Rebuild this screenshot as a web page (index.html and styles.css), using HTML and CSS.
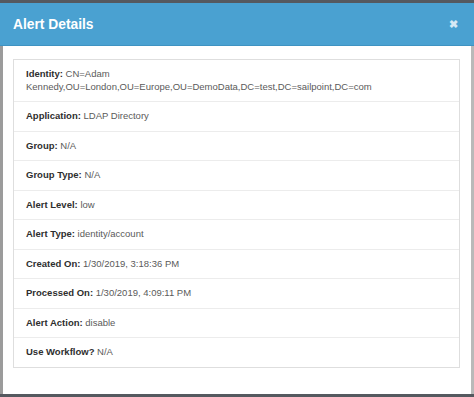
FILE: index.html
```html
<!DOCTYPE html>
<html>
<head>
<meta charset="utf-8">
<link rel="stylesheet" href="styles.css">
</head>
<body>
<div class="modal">
  <div class="modal-header">
    <h1 class="modal-title">Alert Details</h1>
    <span class="close">&#x2716;</span>
  </div>
  <div class="modal-body">
    <ul class="details">
      <li class="row"><b>Identity:</b> CN=Adam Kennedy,OU=London,OU=Europe,OU=DemoData,DC=test,DC=sailpoint,DC=com</li>
      <li class="row"><b>Application:</b> LDAP Directory</li>
      <li class="row"><b>Group:</b> N/A</li>
      <li class="row"><b>Group Type:</b> N/A</li>
      <li class="row"><b>Alert Level:</b> low</li>
      <li class="row"><b>Alert Type:</b> identity/account</li>
      <li class="row"><b>Created On:</b> 1/30/2019, 3:18:36 PM</li>
      <li class="row"><b>Processed On:</b> 1/30/2019, 4:09:11 PM</li>
      <li class="row"><b>Alert Action:</b> disable</li>
      <li class="row"><b>Use Workflow?</b> N/A</li>
    </ul>
  </div>
</div>
</body>
</html>
```

FILE: styles.css
```css
html, body {
  margin: 0;
  padding: 0;
  background: #55595f;
}
body {
  width: 474px;
  height: 397px;
  overflow: hidden;
  font-family: "Liberation Sans", Arial, sans-serif;
}
.modal {
  margin-top: 3px;
  display: flex;
  flex-direction: column;
  height: 391px;
}
.modal-header {
  height: 43px;
  background: #4aa1d1;
  display: flex;
  align-items: center;
  justify-content: space-between;
  padding: 0 16px 0 13px;
  box-sizing: border-box;
  border-bottom: 1px solid #3f93c2;
}
.modal-title {
  margin: 0;
  font-size: 13.8px;
  font-weight: bold;
  color: #ffffff;
}
.close {
  color: #d6e9f5;
  font-size: 11px;
  font-weight: bold;
}
.modal-body {
  flex: 1;
  background: #ffffff;
  border-left: 3px solid #9b9b9b;
  border-right: 3px solid #b9b9b9;
  padding: 13px 11px 0 10px;
}
.details {
  list-style: none;
  margin: 0;
  padding: 0;
  border: 1px solid #dedede;
}
.row {
  padding: 8px 12px;
  font-size: 9.5px;
  line-height: 12.5px;
  color: #5a5a5a;
  border-top: 1px solid #ececec;
}
.row:first-child {
  border-top: none;
}
.row b {
  color: #2e2e2e;
}
```
